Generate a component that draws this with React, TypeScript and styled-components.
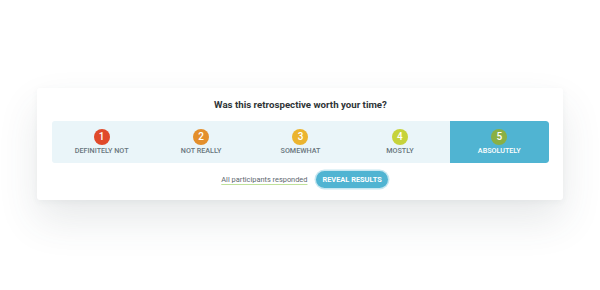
import styled, { createGlobalStyle } from "styled-components";

const GlobalStyle = createGlobalStyle`
  html, body {
    margin: 0;
    padding: 0;
    background: #ffffff;
    font-family: Roboto, "Liberation Sans", Arial, sans-serif;
  }
`

const Page = styled.div`
  width: 600px;
  height: 290px;
  box-sizing: border-box;
  padding: 88px 37px 0 37px;
`

const Card = styled.div`
  width: 526px;
  height: 112px;
  box-sizing: border-box;
  background: #ffffff;
  border-radius: 3px;
  padding: 10px 14px 0 15px;
  box-shadow: 0 20px 40px rgba(60, 70, 80, 0.12), 0 2px 6px rgba(60, 70, 80, 0.05);
  display: flex;
  flex-direction: column;
  align-items: stretch;
`

const Title = styled.h2`
  margin: 0;
  height: 14px;
  line-height: 14px;
  text-align: center;
  font-size: 9.7px;
  font-weight: 700;
  color: #2f3437;
`

const Scale = styled.div`
  margin-top: 9px;
  height: 42px;
  display: grid;
  grid-template-columns: repeat(5, 1fr);
  background: #eaf5f9;
  border-radius: 3px;
  overflow: hidden;
`

const Option = styled.div<{ selected?: boolean }>`
  display: flex;
  flex-direction: column;
  align-items: center;
  padding-top: 8px;
  box-sizing: border-box;
  background: ${p => (p.selected ? "#50b4d2" : "transparent")};
  border-radius: ${p => (p.selected ? "0 3px 3px 0" : "0")};
`

const Badge = styled.span<{ color: string }>`
  width: 16px;
  height: 16px;
  border-radius: 50%;
  background: ${p => p.color};
  color: #ffffff;
  font-size: 10px;
  font-weight: 500;
  line-height: 16px;
  text-align: center;
`

const Label = styled.span<{ selected?: boolean }>`
  margin-top: 1px;
  height: 10px;
  line-height: 10px;
  font-size: 7.2px;
  font-weight: 500;
  text-transform: uppercase;
  color: ${p => (p.selected ? "#ffffff" : "#68757d")};
`

const Footer = styled.div`
  margin-top: 8px;
  display: flex;
  justify-content: center;
  align-items: center;
  gap: 9px;
  padding-left: 8px;
`

const Responded = styled.span`
  font-size: 7.4px;
  color: #5d6870;
  line-height: 10px;
  text-decoration: underline;
  text-decoration-color: #bfe09a;
  text-underline-offset: 2px;
`

const RevealButton = styled.button`
  height: 17px;
  padding: 0 6px;
  border: none;
  border-radius: 9px;
  background: #50b4d2;
  color: #ffffff;
  font-family: inherit;
  font-size: 7.4px;
  font-weight: 700;
  text-transform: uppercase;
  box-shadow: 0 0 0 1.5px #c6e7f1;
`

const options = [
  { n: 1, label: "Definitely not", color: "#e04a2b" },
  { n: 2, label: "Not really", color: "#e38f2c" },
  { n: 3, label: "Somewhat", color: "#ebb42f" },
  { n: 4, label: "Mostly", color: "#c6d33b" },
  { n: 5, label: "Absolutely", color: "#8ab043" },
]

export default function App() {
  return (
    <Page>
      <GlobalStyle />
      <Card>
        <Title>Was this retrospective worth your time?</Title>
        <Scale>
          {options.map(o => (
            <Option key={o.n} selected={o.n === 5}>
              <Badge color={o.color}>{o.n}</Badge>
              <Label selected={o.n === 5}>{o.label}</Label>
            </Option>
          ))}
        </Scale>
        <Footer>
          <Responded>All participants responded</Responded>
          <RevealButton>Reveal results</RevealButton>
        </Footer>
      </Card>
    </Page>
  )
}
